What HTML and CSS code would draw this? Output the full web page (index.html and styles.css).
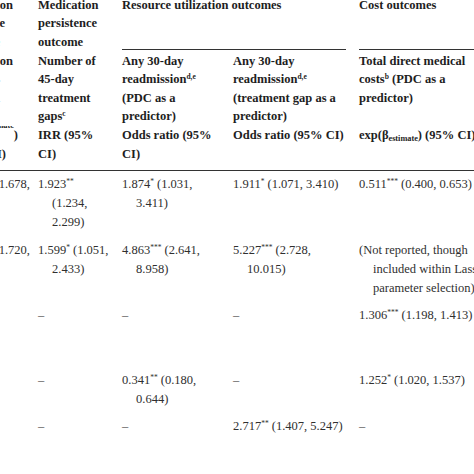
FILE: index.html
```html
<!DOCTYPE html>
<html lang="en">
<head>
<meta charset="utf-8">
<title>Outcomes table</title>
<link rel="stylesheet" href="styles.css">
</head>
<body>
<div class="table">
  <div class="hd c0h">
    <div class="cut r25">Medication</div>
    <div class="cut r33">adherence</div>
    <div class="cut r40">outcome</div>
    <div class="cut r25">Proportion</div>
    <div class="cut r40">of days</div>
    <div class="cut r40">covered</div>
    <div class="cut r40">(PDC)</div>
    <div class="cut r20">exp(β<sub>estimate</sub>)</div>
    <div class="cut r32">(95% CI)</div>
  </div>
  <div class="hd c1h">
    <div>Medication persistence outcome</div>
    <div>Number of 45-day treatment gaps<sup>c</sup></div>
    <div class="narrow">IRR (95% CI)</div>
  </div>
  <div class="hd grp">Resource utilization outcomes</div>
  <div class="hd costg">Cost outcomes</div>
  <div class="hd sub s2">Any 30-day readmission<sup>d,e</sup> (PDC as a predictor)</div>
  <div class="hd sub s3">Any 30-day readmission<sup>d,e</sup> (treatment gap as a predictor)</div>
  <div class="hd sub s4">Total direct medical costs<sup>b</sup> (PDC as a predictor)</div>
  <div class="hd stat s2">Odds ratio (95% CI)</div>
  <div class="hd stat s3">Odds ratio (95% CI)</div>
  <div class="hd stat s4">exp(β<sub>estimate</sub>) (95% CI)</div>
  <div class="rule"></div>

  <div class="cell lab"><div class="cut r8">1.236*** (1.678,</div></div>
  <div class="cell v">1.923<sup>**</sup> (1.234, 2.299)</div>
  <div class="cell v">1.874<sup>*</sup> (1.031, 3.411)</div>
  <div class="cell v">1.911<sup>*</sup> (1.071, 3.410)</div>
  <div class="cell v">0.511<sup>***</sup> (0.400, 0.653)</div>

  <div class="cell lab"><div class="cut r8">1.418** (1.720,</div></div>
  <div class="cell v">1.599<sup>*</sup> (1.051, 2.433)</div>
  <div class="cell v">4.863<sup>***</sup> (2.641, 8.958)</div>
  <div class="cell v">5.227<sup>***</sup> (2.728, 10.015)</div>
  <div class="cell v">(Not reported, though included within Lasso parameter selection)</div>

  <div class="cell lab tall"></div>
  <div class="cell dash">–</div>
  <div class="cell dash">–</div>
  <div class="cell dash">–</div>
  <div class="cell v">1.306<sup>***</sup> (1.198, 1.413)</div>

  <div class="cell lab"></div>
  <div class="cell dash">–</div>
  <div class="cell v">0.341<sup>**</sup> (0.180, 0.644)</div>
  <div class="cell dash">–</div>
  <div class="cell v">1.252<sup>*</sup> (1.020, 1.537)</div>

  <div class="cell lab"></div>
  <div class="cell dash">–</div>
  <div class="cell dash">–</div>
  <div class="cell v">2.717<sup>**</sup> (1.407, 5.247)</div>
  <div class="cell dash">–</div>
</div>
</body>
</html>
```
FILE: styles.css
```css
html, body {
  margin: 0;
  padding: 0;
  background: #ffffff;
}
body {
  width: 474px;
  height: 474px;
  overflow: hidden;
  font-family: "Liberation Serif", "Times New Roman", serif;
  font-size: 12.5px;
  color: #2f2f2f;
}
.table {
  display: grid;
  grid-template-columns: 38px 84px 111px 126px 142px;
  margin-top: -4.2px;
  line-height: 18.6px;
}
.hd {
  font-weight: bold;
  color: #1e1e1e;
}
sup {
  font-size: 0.6em;
  line-height: 0;
  vertical-align: 0.5em;
}
sub {
  font-size: 0.66em;
  line-height: 0;
  vertical-align: -0.22em;
}
.c0h {
  grid-column: 1;
  grid-row: 1 / span 3;
}
.c1h {
  grid-column: 2;
  grid-row: 1 / span 3;
  padding-right: 12px;
}
.narrow {
  max-width: 64px;
}
.grp {
  grid-column: 3 / span 2;
  grid-row: 1;
  padding-bottom: 34.6px;
  border-bottom: 1px solid #333333;
  margin-right: 13px;
}
.costg {
  grid-column: 5;
  grid-row: 1;
  padding-bottom: 34.6px;
  border-bottom: 1px solid #333333;
}
.sub {
  grid-row: 2;
  padding-top: 1.5px;
  padding-right: 12px;
}
.stat {
  grid-row: 3;
  padding-right: 12px;
}
.s2 { grid-column: 3; }
.s3 { grid-column: 4; }
.s4 { grid-column: 5; }
.rule {
  grid-column: 1 / -1;
  grid-row: 4;
  margin-top: 7px;
  border-top: 1px solid #333333;
}
.cell {
  padding: 4.3px 12px 3.9px 0;
  line-height: 19px;
}
.cell.lab {
  padding-right: 0;
}
.cell.tall {
  min-height: 57px;
}
.v {
  padding-left: 14px;
  text-indent: -14px;
}
.dash {
  color: #555555;
}
.cut {
  display: flex;
  justify-content: flex-end;
  overflow: hidden;
  white-space: nowrap;
}
.r8 { padding-right: 8px; }
.r20 { padding-right: 20px; }
.r25 { padding-right: 25px; }
.r32 { padding-right: 32px; }
.r33 { padding-right: 33px; }
.r40 { padding-right: 40px; }
```
